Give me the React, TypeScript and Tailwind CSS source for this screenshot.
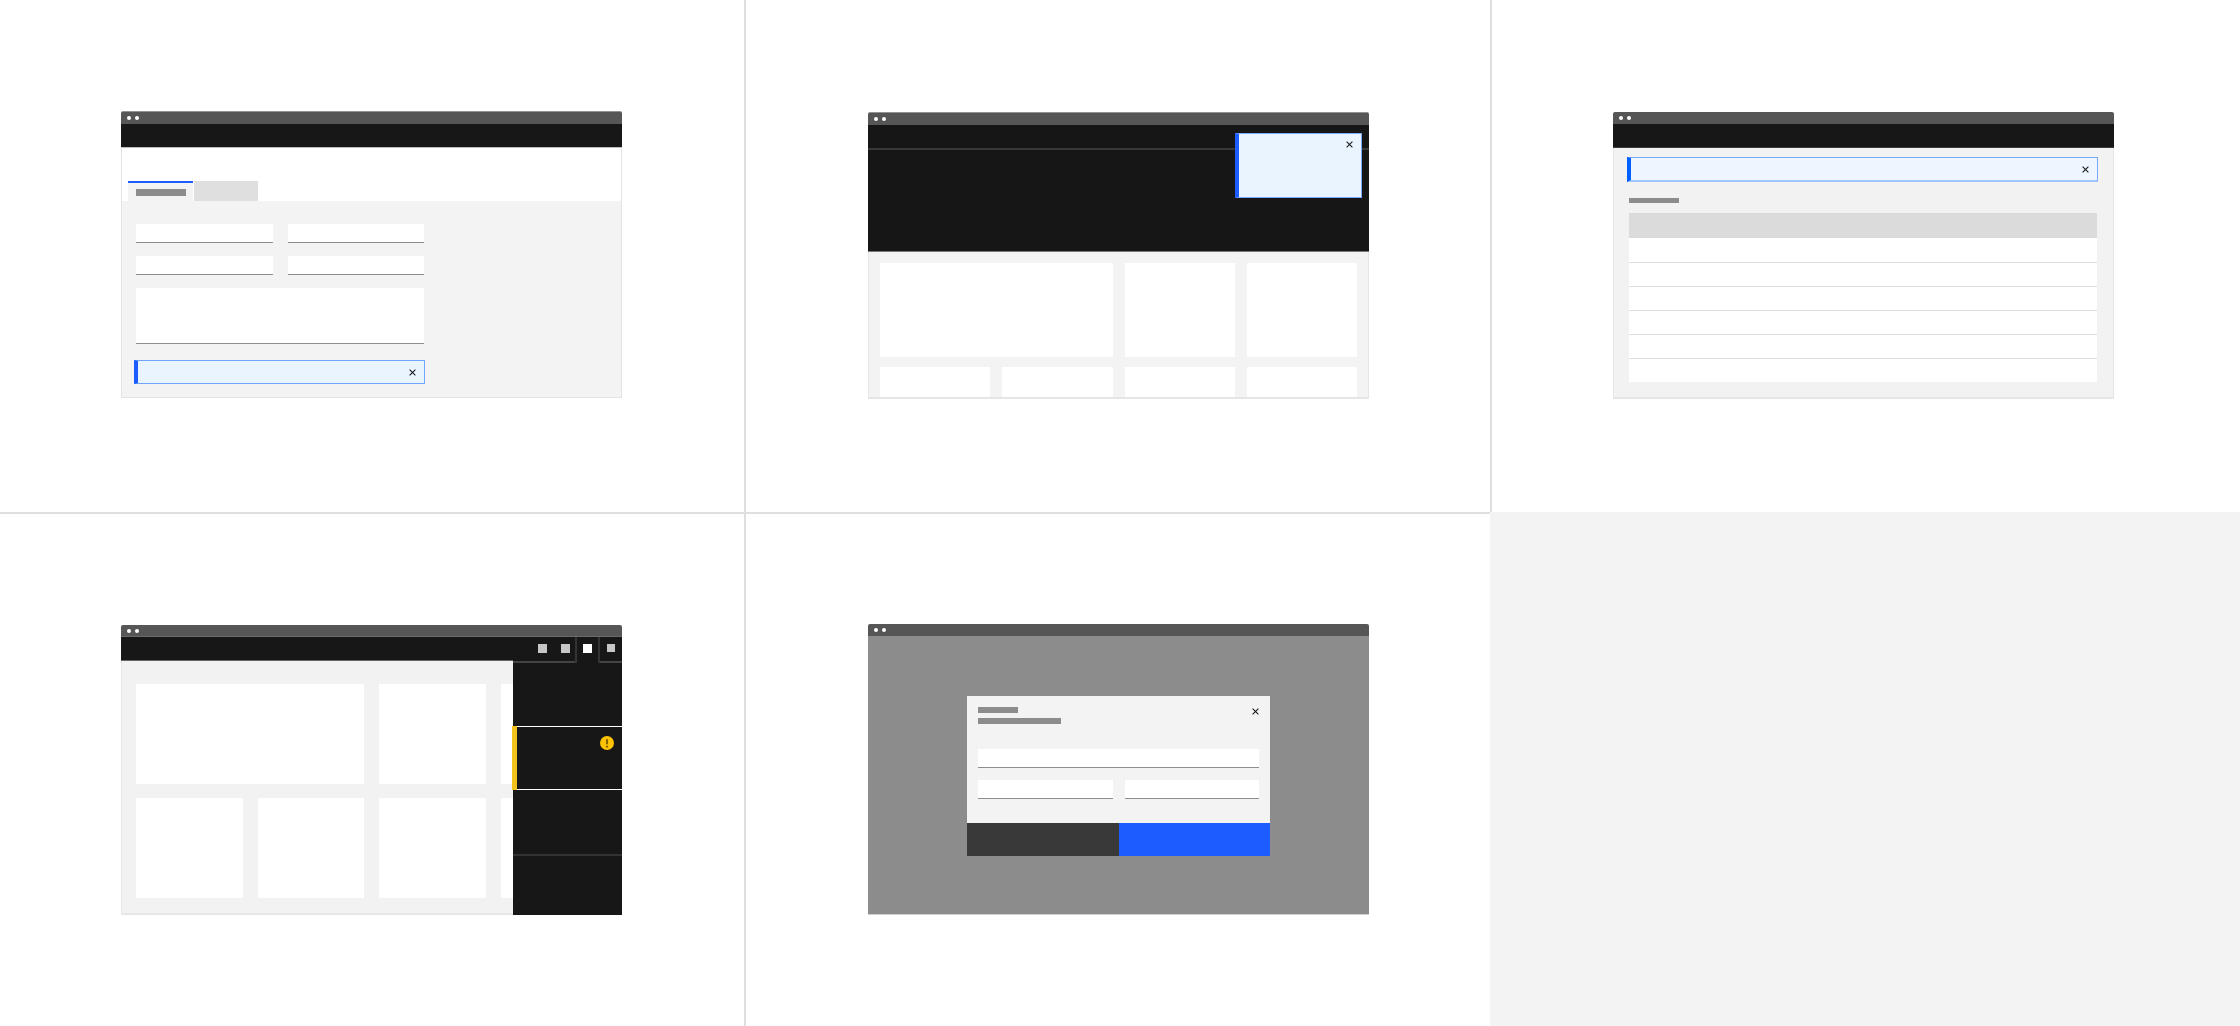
import type { ReactNode } from "react";

function CloseButton({ className = "" }: { className?: string }) {
  return (
    <button type="button" aria-label="Close" className={`block size-[7px] ${className}`}>
      <svg viewBox="0 0 7 7" className="block size-[7px]" fill="none">
        <path d="M0.6 0.6L6.4 6.4M6.4 0.6L0.6 6.4" stroke="#161616" strokeWidth="1.05" />
      </svg>
    </button>
  );
}

function BrowserWindow({
  barClassName = "h-3",
  children,
}: {
  barClassName?: string;
  children: ReactNode;
}) {
  return (
    <div className="w-full">
      <div
        className={`flex items-center gap-1 rounded-t-[2px] bg-[#565656] pl-[6px] ${barClassName}`}
      >
        <span className="size-1 rounded-full bg-white" />
        <span className="size-1 rounded-full bg-white" />
      </div>
      {children}
    </div>
  );
}

function Field({ label }: { label: string }) {
  return (
    <input
      type="text"
      aria-label={label}
      className="block h-[19px] w-full border-b border-[#8d8d8d] bg-white outline-none"
    />
  );
}

function FormWindow() {
  return (
    <BrowserWindow barClassName="h-[13px] border-t border-[#929292]">
      <div className="h-[23px] bg-[#171717]" />
      <div className="border border-[#e3e3e3] border-t-[#bdbdbd] bg-white">
        <div className="flex gap-px pt-[33px] pl-[6px]">
          <button
            type="button"
            aria-label="First tab"
            className="flex h-5 w-[65px] border-t-2 border-[#1d5cff] bg-[#f3f3f3] pt-[6px] pl-2"
          >
            <span className="h-[7px] w-[50px] bg-[#8c8c8c]" />
          </button>
          <button type="button" aria-label="Second tab" className="h-5 w-16 bg-[#dfdfdf]" />
        </div>
        <form className="bg-[#f3f3f3] pt-[23px] pr-[196px] pb-[13px] pl-3">
          <div className="mr-px ml-[2px] grid grid-cols-2 gap-x-[15px] gap-y-[13px]">
            <Field label="First name" />
            <Field label="Last name" />
            <Field label="Email" />
            <Field label="Phone" />
            <textarea
              aria-label="Message"
              className="col-span-2 block h-14 w-full resize-none border-b border-[#8d8d8d] bg-white outline-none"
            />
          </div>
          <div
            role="status"
            className="mt-4 flex h-6 items-center justify-end border border-l-4 border-[#6ea6ff] border-l-[#1d5cff] bg-[#eaf4ff] pr-2"
          >
            <CloseButton />
          </div>
        </form>
      </div>
    </BrowserWindow>
  );
}

function DashboardWindow() {
  return (
    <BrowserWindow barClassName="h-[13px] border-t border-[#929292]">
      <div className="relative bg-[#161616]">
        <div className="h-[25px] border-b-2 border-[#383838]" />
        <div className="h-[102px] border-b border-[#777777]" />
        <div
          role="status"
          className="absolute top-2 right-[7px] flex h-[65px] w-[127px] justify-end border border-l-4 border-[#78a9ff] border-l-[#1d5cff] bg-[#eaf4ff] pt-[7px] pr-2"
        >
          <CloseButton />
        </div>
      </div>
      <div className="grid grid-cols-4 gap-x-3 gap-y-[10px] border-r border-b-2 border-l border-[#e5e5e5] bg-[#f3f3f3] px-[11px] pt-[11px]">
        <div className="col-span-2 h-[94px] bg-white" />
        <div className="bg-white" />
        <div className="bg-white" />
        <div className="h-[30px] bg-white" />
        <div className="bg-white" />
        <div className="bg-white" />
        <div className="bg-white" />
      </div>
    </BrowserWindow>
  );
}

function TableWindow() {
  return (
    <BrowserWindow>
      <div className="h-6 border-b border-[#40383c] bg-[#171717]" />
      <div className="border-r border-b-2 border-l border-[#e5e5e5] bg-[#f2f2f2] pt-[9px] pr-4 pb-[15px] pl-[15px]">
        <div
          role="status"
          className="-mr-px -ml-[2px] flex h-[25px] items-center justify-end border border-b-2 border-l-4 border-[#78a9ff] border-b-[#a0c5ff] border-l-[#0060ff] bg-[#edf5ff] pr-2"
        >
          <CloseButton />
        </div>
        <div className="mt-4 h-[5px] w-[50px] bg-[#8c8c8c]" />
        <table className="mt-[10px] w-full border-collapse bg-white">
          <thead>
            <tr className="h-[25px]">
              <th aria-label="Name" className="bg-[#dbdbdb] p-0" />
            </tr>
          </thead>
          <tbody>
            {[1, 2, 3, 4, 5, 6].map((row) => (
              <tr key={row} className="h-6 border-b border-[#dedede] last:border-b-0">
                <td className="p-0" />
              </tr>
            ))}
          </tbody>
        </table>
      </div>
    </BrowserWindow>
  );
}

function WarningIcon() {
  return (
    <svg viewBox="0 0 14 14" className="size-[14px]" aria-hidden="true">
      <circle cx="7" cy="7" r="7" fill="#fdc200" />
      <path d="M6 3.2h2v5H6zM6 9.7h2v1.8H6z" fill="#846500" />
    </svg>
  );
}

function PanelWindow() {
  return (
    <BrowserWindow barClassName="h-3 border-b border-[#6b6b6b]">
      <div className="flex">
        <div className="flex flex-1 flex-col">
          <div className="h-6 border-b border-[#666666] bg-[#171717]" />
          <div className="grid flex-1 grid-cols-[1fr_1fr_1fr_12px] content-start gap-x-[15px] gap-y-[14px] border-b-2 border-l border-[#e6e6e6] bg-[#f2f2f2] pt-[23px] pl-[14px]">
            <div className="col-span-2 h-[100px] bg-white" />
            <div className="bg-white" />
            <div className="bg-white" />
            <div className="h-[100px] bg-white" />
            <div className="bg-white" />
            <div className="bg-white" />
            <div className="bg-white" />
          </div>
        </div>
        <div className="w-[109px] bg-[#171717]">
          <div className="flex h-[26px]">
            <div className="flex flex-1 justify-end gap-[14px] border-b-2 border-[#444444] pt-[7px] pr-[5px]">
              <button type="button" aria-label="Search" className="size-[9px] bg-[#c6c6c6]" />
              <button type="button" aria-label="Help" className="size-[9px] bg-[#c6c6c6]" />
            </div>
            <div className="flex w-[25px] border-x-2 border-[#343434] pt-[7px] pl-[6px]">
              <button type="button" aria-label="Notifications" className="size-[9px] bg-white" />
            </div>
            <div className="flex w-[22px] border-b-2 border-[#444444] pt-[7px] pl-[7px]">
              <button type="button" aria-label="Account" className="size-2 bg-[#c6c6c6]" />
            </div>
          </div>
          <div className="h-[63px]" />
          <div className="-ml-px flex h-16 border-l-[5px] border-[#f1c21b]">
            <div className="flex flex-1 justify-end border-y border-white pt-[9px] pr-2">
              <WarningIcon />
            </div>
          </div>
          <div className="h-[66px] border-b-2 border-[#323232]" />
          <div className="h-[59px]" />
        </div>
      </div>
    </BrowserWindow>
  );
}

function ModalWindow() {
  return (
    <BrowserWindow>
      <div className="flex justify-center border-b border-[#cfcfcf] bg-[#8c8c8c] pt-[60px] pb-[58px]">
        <div role="dialog" aria-label="Dialog" className="w-[303px] bg-[#f3f3f3]">
          <div className="flex justify-between px-[11px] pt-[11px]">
            <div>
              <div className="h-[6px] w-10 bg-[#8c8c8c]" />
              <div className="mt-[5px] h-[6px] w-[83px] bg-[#8c8c8c]" />
            </div>
            <CloseButton className="mt-px" />
          </div>
          <div className="grid grid-cols-2 gap-x-3 gap-y-3 px-[11px] pt-[25px] pb-6">
            <div className="col-span-2">
              <Field label="Title" />
            </div>
            <Field label="Start" />
            <Field label="End" />
          </div>
          <div className="grid grid-cols-2">
            <button type="button" aria-label="Cancel" className="h-[33px] bg-[#393939]" />
            <button type="button" aria-label="Save" className="h-[33px] bg-[#1d5cff]" />
          </div>
        </div>
      </div>
    </BrowserWindow>
  );
}

export default function App() {
  return (
    <main className="grid min-h-screen grid-cols-[746fr_744fr_750fr] grid-rows-[512fr_514fr] bg-white">
      <section className="border-r-2 border-[#dfdfdf] pt-[111px] pr-[122px] pl-[121px]">
        <FormWindow />
      </section>
      <section className="pt-28 pr-[121px] pl-[122px]">
        <DashboardWindow />
      </section>
      <section className="border-l-2 border-[#dfdfdf] pt-28 pr-[126px] pl-[121px]">
        <TableWindow />
      </section>
      <section className="border-t-2 border-r-2 border-[#dfdfdf] pt-[111px] pr-[122px] pl-[121px]">
        <PanelWindow />
      </section>
      <section className="border-t-2 border-[#dfdfdf] pt-[110px] pr-[121px] pl-[122px]">
        <ModalWindow />
      </section>
      <section className="bg-[#f3f3f3]" />
    </main>
  );
}
